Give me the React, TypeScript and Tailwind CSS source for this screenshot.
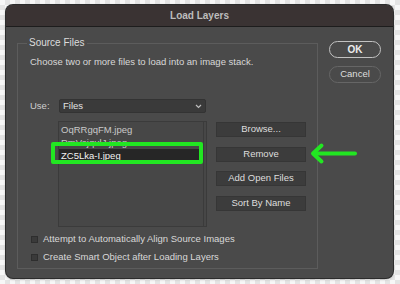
export default function App() {
  const files = ['OqRRgqFM.jpeg', 'RmVojqulJ.jpeg', 'ZC5Lka-I.jpeg'];
  const actions = ['Browse...', 'Remove', 'Add Open Files', 'Sort By Name'];

  return (
    <div
      className="w-[400px] h-[284px] pt-[5px] pl-[6px] bg-[conic-gradient(#e4e4e4_25%,#f7f7f7_0_50%,#e4e4e4_0_75%,#f7f7f7_0)] bg-size-[10px_10px] font-['Liberation_Sans',Arial,sans-serif] text-[9.5px] text-[#d8d8d8]"
    >
      {/* Dialog */}
      <div className="relative w-[387px] h-[273px] rounded-[7px] overflow-hidden bg-[#4a4a4a] ring-1 ring-[#2c2c2c] shadow-[0_1px_3px_rgba(0,0,0,0.35)]">
        <div className="h-[22px] flex items-center justify-center bg-[#3a3333] border-b border-[#1d1d1d] text-[#bdbdbd] font-bold text-[10px]">
          Load Layers
        </div>

        <div className="flex pl-[11px] pt-[14px] gap-[11px]">
          {/* Source Files group */}
          <div className="relative mt-[2px] w-[301px] h-[226px] border border-[#5c5c5c]">
            <span className="absolute left-[9px] top-[-8px] px-[2px] bg-[#4a4a4a] leading-[14px] text-[10px] text-[#dcdcdc]">
              Source Files
            </span>

            <div className="pl-[12px] pt-[11px]">
              <p className="h-[14px] leading-[14px]">
                Choose two or more files to load into an image stack.
              </p>

              <div className="mt-[30px] flex items-center h-[14px]">
                <span className="w-[29px] text-[#cfcfcf]">Use:</span>
                <div className="w-[147px] h-[14px] flex items-center justify-between pl-[3px] pr-[3px] bg-[#3a3a3a] border border-[#333333] rounded-[2px]">
                  <span className="text-[#e2e2e2]">Files</span>
                  <svg width="7" height="5" viewBox="0 0 7 5" fill="none" stroke="#bdbdbd" strokeWidth="1.2">
                    <polyline points="1,1 3.5,3.5 6,1" />
                  </svg>
                </div>
              </div>

              <div className="mt-[8px] flex gap-[9px]">
                {/* File list */}
                <div className="ml-[28px] w-[149px] h-[106px] flex border border-[#3b3b3b] bg-[#474747]">
                  <div className="flex-1 pt-[1px]">
                    {files.map((f, i) => (
                      <div
                        key={f}
                        className={
                          i === 2
                            ? 'h-[13px] leading-[13px] pl-[2px] bg-[#262626] text-[#f2f2f2]'
                            : 'h-[13px] leading-[13px] pl-[2px] text-[#c9c9c9]'
                        }
                      >
                        {f}
                      </div>
                    ))}
                  </div>
                  <div className="w-[3px] border-l border-[#3b3b3b]" />
                </div>

                {/* Action buttons */}
                <div className="mt-[1px] flex flex-col gap-[9.5px]">
                  {actions.map(a => (
                    <div
                      key={a}
                      className="w-[90px] h-[15px] flex items-center justify-center bg-[#3c3c3c] border border-[#363636] text-[#dedede]"
                    >
                      {a}
                    </div>
                  ))}
                </div>
              </div>

              <div className="mt-[5px] flex items-center gap-[5px] h-[14px] pl-[1px]">
                <span className="w-[7px] h-[7px] bg-[#3a3a3a] border border-[#2e2e2e]" />
                <span>Attempt to Automatically Align Source Images</span>
              </div>
              <div className="mt-[4px] flex items-center gap-[5px] h-[14px] pl-[1px]">
                <span className="w-[7px] h-[7px] bg-[#3a3a3a] border border-[#2e2e2e]" />
                <span>Create Smart Object after Loading Layers</span>
              </div>
            </div>
          </div>

          {/* OK / Cancel */}
          <div className="flex flex-col gap-[8px]">
            <div className="w-[52px] h-[17px] flex items-center justify-center rounded-full border-[1.5px] border-[#c2c2c2] text-[#ececec] font-bold text-[10px]">
              OK
            </div>
            <div className="w-[52px] h-[17px] flex items-center justify-center rounded-full border border-[#666666] text-[#dedede]">
              Cancel
            </div>
          </div>
        </div>

        {/* Annotation: green highlight box */}
        <div className="absolute left-[45px] top-[137px] w-[152px] h-[22px] border-[4px] border-[#22e622] rounded-[2px]" />

        {/* Annotation: green arrow */}
        <svg
          className="absolute left-[302px] top-[136px]"
          width="50"
          height="25"
          viewBox="0 0 50 25"
          fill="none"
          stroke="#22e622"
          strokeWidth="4"
          strokeLinecap="round"
          strokeLinejoin="round"
        >
          <path d="M6 12.5H47" />
          <path d="M13.5 4.5L5 12.5L13.5 20.5" />
        </svg>
      </div>
    </div>
  );
}
